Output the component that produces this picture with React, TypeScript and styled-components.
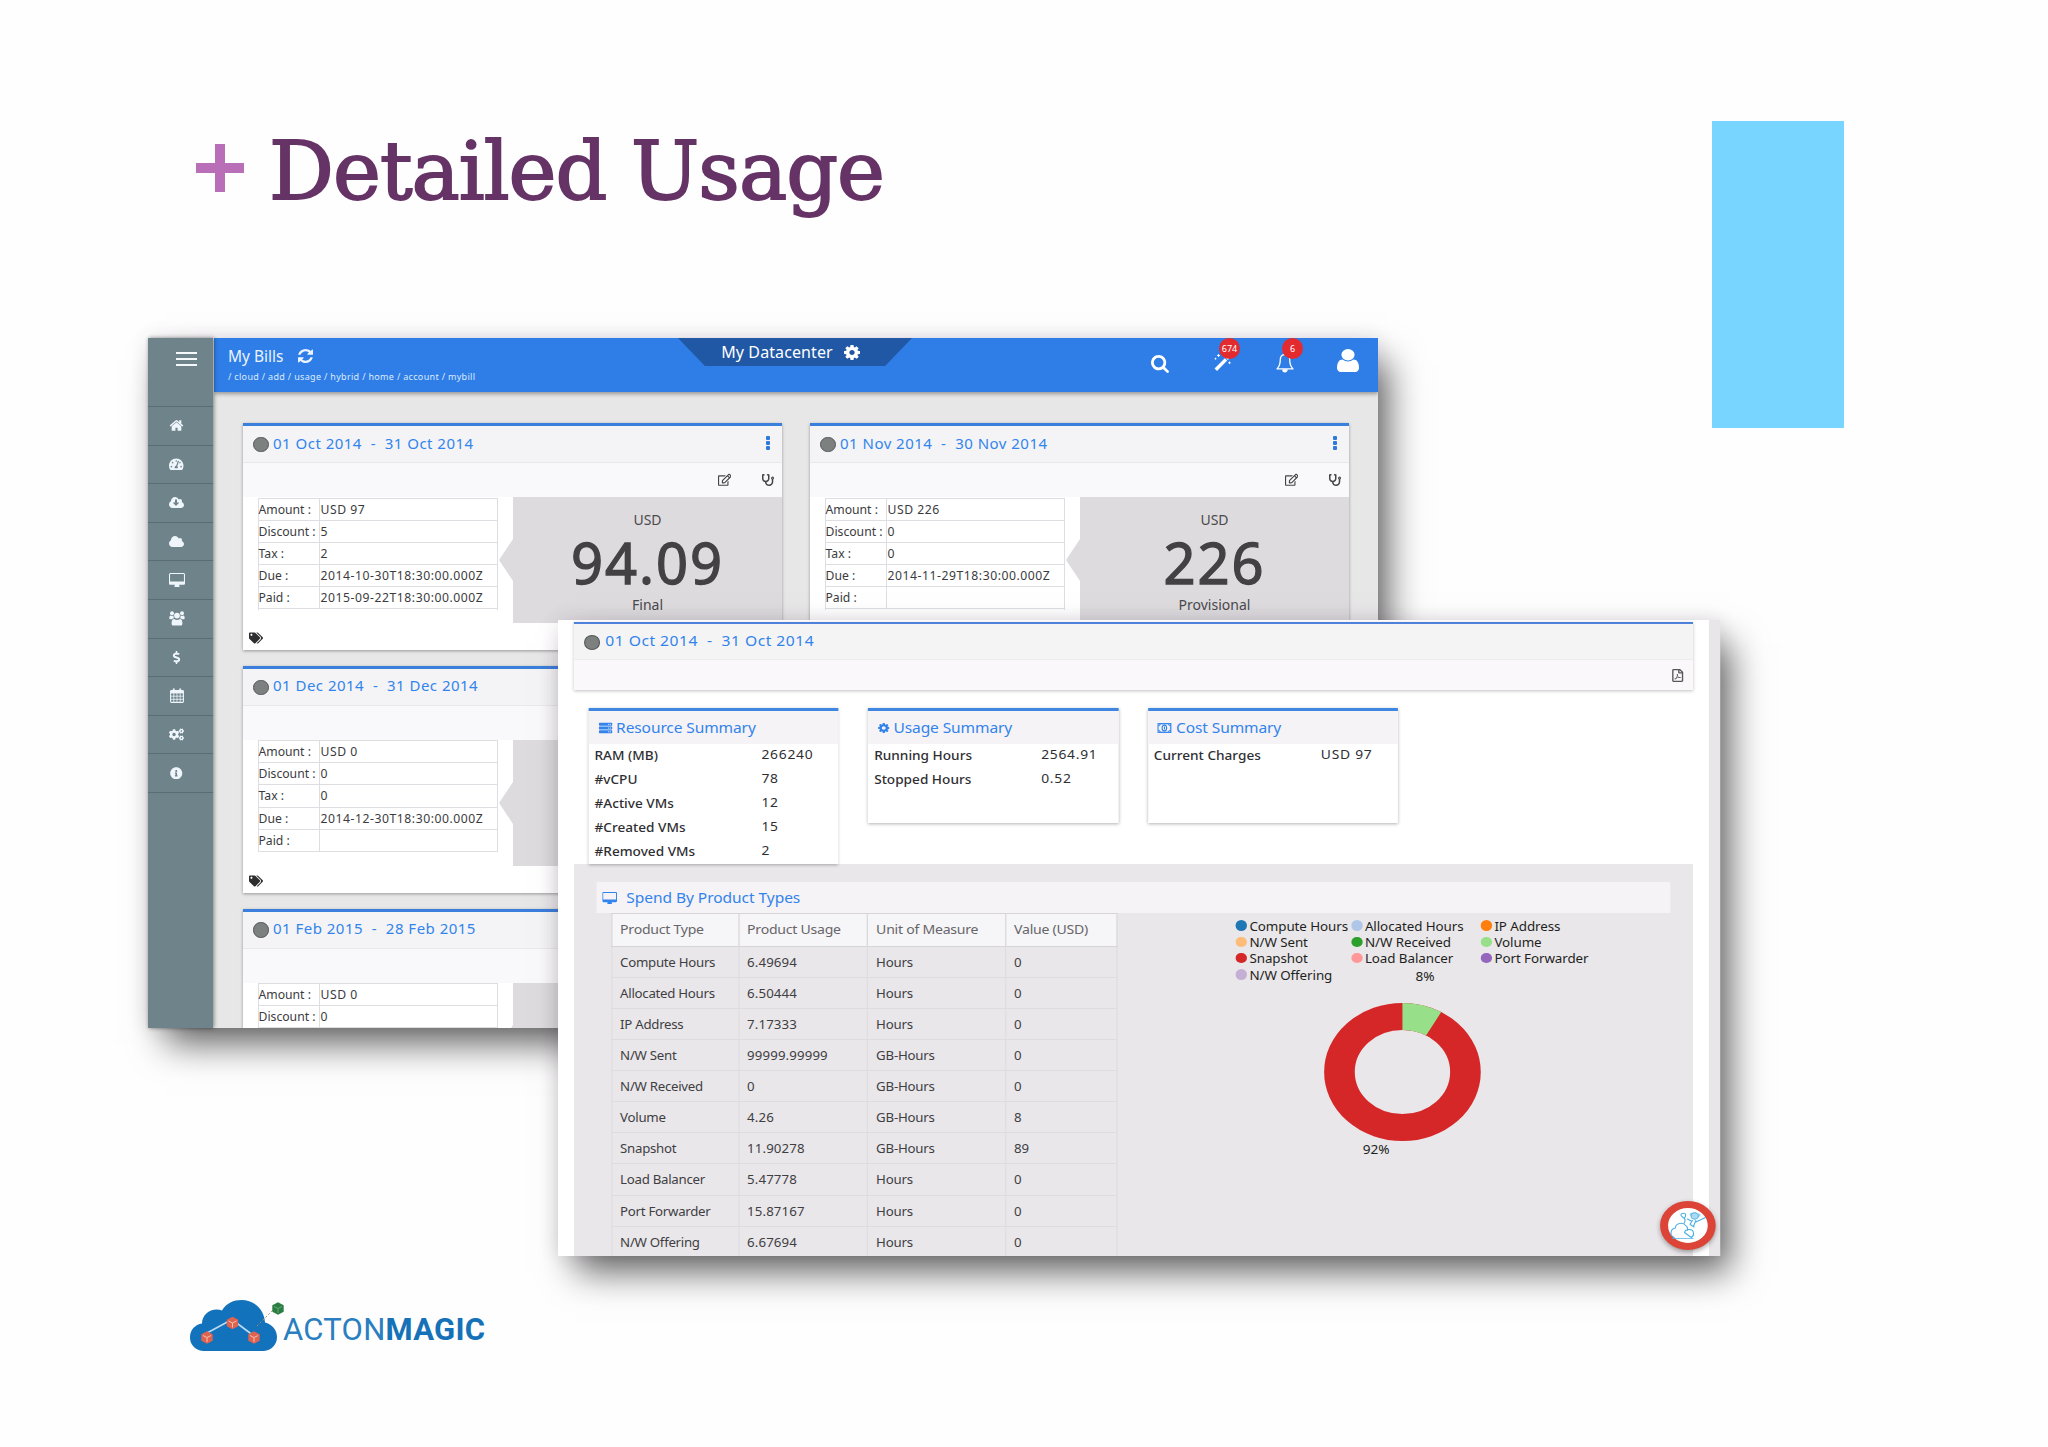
import React from "react";
import styled, { createGlobalStyle } from "styled-components";
import {
  FaTachometerAlt, FaDollarSign, FaCogs, FaInfoCircle, FaTags,
  FaRegEdit, FaStethoscope, FaRegFilePdf, FaServer,
} from "react-icons/fa";

/* The detail window is shown wider than its native proportions. */
const STRETCH = 1.135;
const w = (n: number) => `${n / STRETCH}px`;

const FONT = `"Noto Sans", "Open Sans", sans-serif`;

const GlobalStyle = createGlobalStyle`
  *, *::before, *::after { box-sizing: border-box; }
  html, body { margin: 0; padding: 0; background: #fff; }
  body { font-family: ${FONT}; }
  svg { display: block; flex: none; }
`;

/* ---------- slide ---------- */
const Slide = styled.main`
  position: relative;
  width: 2048px;
  height: 1447px;
  overflow: hidden;
  background: #fefefe;
  display: flex;
  flex-direction: column;
  justify-content: space-between;
  padding: 121px 204px 92px 190px;
`;
const SlideHeader = styled.header`
  display: flex;
  justify-content: space-between;
`;
const Heading = styled.div`
  display: flex;
  gap: 25px;
  padding: 0 0 0 6px;
`;
const Plus = styled.svg`
  margin-top: 23px;
`;
const Title = styled.h1`
  margin: 0;
  font: 400 81px/100px "DejaVu Serif", serif;
  letter-spacing: -1px;
  -webkit-text-stroke: 1.8px #663366;
  color: #663366;
  white-space: nowrap;
`;
const Accent = styled.div`
  width: 132px;
  height: 307px;
  background: #77d5ff;
`;
const Logo = styled.footer`
  display: flex;
  align-items: flex-start;
  height: 56px;
`;
const LogoText = styled.span`
  font: 400 31px/36px Roboto, sans-serif;
  color: #2a7fc0;
  letter-spacing: 0.25px;
  margin: 13px 0 0 -5px;
  white-space: nowrap;
  b { font-weight: 700; color: #1571b8; }
`;

/* ---------- windows ---------- */
const Window = styled.section`
  position: absolute;
  box-shadow: 14px 20px 34px -4px rgba(0, 0, 0, 0.6), 0 0 18px rgba(90, 50, 90, 0.12);
`;
const BillsWindow = styled(Window)`
  left: 148px;
  top: 338px;
  width: 1230px;
  height: 690px;
  display: flex;
  background: #e8e7e8;
`;
const DetailWindow = styled(Window)`
  left: 558px;
  top: 620px;
  width: 1162px;
  height: 636px;
  background: #fff;
`;

/* ---------- sidebar ---------- */
const Sidebar = styled.nav`
  width: 65px;
  flex: none;
  background: #6f838b;
  box-shadow: 1px 0 4px rgba(0, 0, 0, 0.45);
  z-index: 1;
`;
const Burger = styled.div`
  height: 68px;
  padding: 14px 0 0 28px;
  display: flex;
  flex-direction: column;
  gap: 4px;
  i { width: 21px; height: 2px; background: #f4f8fa; }
`;
const NavItem = styled.div`
  height: 38.6px;
  border-top: 1px solid #596d76;
  display: flex;
  align-items: center;
  justify-content: center;
  padding-right: 8px;
  color: #eef5fb;
  &:last-child { border-bottom: 1px solid #596d76; height: 39.6px; }
`;

/* ---------- bills window main ---------- */
const Main = styled.div`
  flex: 1;
  min-width: 0;
  margin-left: 1px;
  overflow: hidden;
`;
const TopBar = styled.header`
  position: relative;
  height: 54px;
  background: #2f7de6;
  color: #fff;
  display: flex;
  justify-content: space-between;
  box-shadow: 0 2px 4px rgba(0, 0, 0, 0.35);
`;
const PageInfo = styled.div`
  padding: 7px 0 0 14px;
`;
const PageTitle = styled.div`
  display: flex;
  align-items: center;
  gap: 14px;
  font-size: 15.5px;
  line-height: 22px;
  color: #eaf3ff;
  letter-spacing: 0px;
`;
const Crumbs = styled.div`
  font-size: 9px;
  line-height: 14px;
  margin-top: 3px;
  letter-spacing: 0.32px;
  color: #dcebff;
  white-space: pre;
`;
const CenterTab = styled.div`
  position: absolute;
  left: 464px;
  top: 0;
  width: 234px;
  height: 28px;
  background: #2058a5;
  clip-path: polygon(0 0, 100% 0, 88.5% 100%, 11.5% 100%);
  display: flex;
  align-items: center;
  justify-content: center;
  gap: 11px;
  padding-right: 9px;
  font-size: 16px;
  line-height: 26px;
  letter-spacing: 0.1px;
`;
const TopIcons = styled.div`
  display: flex;
  padding-right: 18px;
`;
const TopIcon = styled.div<{ $w: number; $top: number }>`
  position: relative;
  width: ${(p) => p.$w}px;
  padding-top: ${(p) => p.$top}px;
`;
const Badge = styled.span<{ $x: number }>`
  position: absolute;
  left: ${(p) => p.$x}px;
  top: 0;
  width: 21px;
  height: 21px;
  border-radius: 50%;
  background: #e32a2f;
  font-size: 9px;
  line-height: 21px;
  text-align: center;
`;
const Cards = styled.div`
  display: grid;
  grid-template-columns: 539px 539px;
  column-gap: 28px;
  row-gap: 15.8px;
  padding: 31px 0 0 29px;
`;
const Card = styled.article`
  height: 227px;
  background: #fff;
  border-top: 3px solid #3b7fdc;
  box-shadow: 0 1px 3px rgba(0, 0, 0, 0.35);
`;
const CardHead = styled.div`
  height: 37px;
  display: flex;
  align-items: center;
  background: #f4f4f6;
  border-bottom: 1px solid #e9e9ec;
  padding: 0 12px 3px 10px;
`;
const Dot = styled.i<{ $w?: number; $h?: number }>`
  width: ${(p) => p.$w ?? 15.5}px;
  height: ${(p) => p.$h ?? 15.5}px;
  border-radius: 50%;
  background: #7c807f;
  border: 1.5px solid #55585a;
  margin: 4px 4.5px 0 0;
  flex: none;
`;
const Period = styled.span`
  flex: 1;
  font-size: 15px;
  letter-spacing: 0.48px;
  color: #3284ec;
  white-space: pre;
`;
const Kebab = styled.span`
  display: flex;
  flex-direction: column;
  gap: 1px;
  i { width: 4px; height: 4px; border-radius: 1px; background: #2f79de; }
`;
const CardTools = styled.div`
  height: 34px;
  background: #f9f8fa;
  display: flex;
  justify-content: flex-end;
  align-items: center;
  gap: 31px;
  padding: 0 8px 0 0;
  color: #444;
`;
const CardBody = styled.div`
  display: flex;
  height: 126px;
`;
const Facts = styled.dl`
  margin: 0.5px 0 0 14.5px;
  width: 240px;
  height: 112px;
  display: grid;
  grid-template-columns: 61px 1fr;
  grid-auto-rows: 22.1px;
  border: solid #dedee2;
  border-width: 1px 1px 0 1px;
  font-size: 12.2px;
  line-height: 21.5px;
  color: #3b3b3e;
`;
const Term = styled.dt`
  border: solid #dedee2;
  border-width: 0 1px 1px 0;
  white-space: nowrap;
`;
const Value = styled.dd`
  margin: 0;
  padding-left: 1px;
  border-bottom: 1px solid #dedee2;
  letter-spacing: 0.54px;
`;
const Total = styled.div`
  position: relative;
  margin-left: 15.5px;
  flex: 1;
  background: #dddbde;
  color: #4b494c;
  text-align: center;
  font-size: 14px;
  line-height: 20px;
  padding-top: 12.5px;
  &::before {
    content: "";
    position: absolute;
    left: -14px;
    top: 42px;
    border: solid transparent;
    border-width: 21px 14px 21px 0;
    border-right-color: #dddbde;
  }
`;
const Figure = styled.div`
  font-size: 56px;
  line-height: 65px;
  letter-spacing: 2px;
  -webkit-text-stroke: 1.3px #434144;
  color: #434144;
`;
const CardFoot = styled.div`
  padding: 8px 0 0 6px;
  color: #2e2e30;
`;

/* ---------- detail window ---------- */
const Stretched = styled.div`
  width: ${w(1162)};
  height: 636px;
  overflow: hidden;
  transform: scaleX(${STRETCH});
  transform-origin: 0 0;
  border-right: ${w(12)} solid #e8e6e9;
  padding: 2px ${w(16)} 0 ${w(16)};
  position: relative;
`;
const PeriodBox = styled.div`
  height: 68px;
  border-top: 2px solid #4f80db;
  background: #faf8fb;
  box-shadow: 0 1px 3px rgba(0, 0, 0, 0.25);
  display: flex;
  flex-direction: column;
`;
const PeriodHead = styled.div`
  height: 36px;
  display: flex;
  align-items: center;
  background: #f5f4f5;
  border-bottom: 1px solid #ececee;
  padding: 0 0 2px ${w(10)};
`;
const PeriodText = styled(Period)`
  font-size: 13.8px;
  letter-spacing: 0.42px;
`;
const PeriodTools = styled.div`
  flex: 1;
  display: flex;
  align-items: center;
  justify-content: flex-end;
  padding-right: ${w(8)};
  color: #57565a;
`;
const Summaries = styled.div`
  display: flex;
  align-items: flex-start;
  gap: ${w(29.7)};
  height: 174px;
  padding: 18px 0 0 ${w(14.5)};
`;
const Summary = styled.section<{ $h: number }>`
  position: relative;
  z-index: 1;
  width: ${w(250)};
  flex: none;
  height: ${(p) => p.$h}px;
  background: #fff;
  border-top: 3px solid #3f86e0;
  box-shadow: 0 1px 3px rgba(0, 0, 0, 0.3);
`;
const SummaryTitle = styled.h2`
  margin: 0;
  height: 33px;
  display: flex;
  align-items: center;
  gap: ${w(4)};
  padding-left: ${w(10)};
  background: #f5f3f6;
  color: #3284ec;
  font-size: 13.7px;
  font-weight: 400;
  letter-spacing: -0.1px;
  white-space: nowrap;
`;
const SummaryRow = styled.div`
  display: flex;
  height: 24px;
  padding-left: ${w(6)};
  font-size: 12px;
  line-height: 24px;
  color: #2f2f33;
  span:first-child { width: ${w(167)}; font-weight: 500; white-space: nowrap; }
  span:last-child { line-height: 21px; font-size: 12.2px; letter-spacing: 0.65px; }
`;
const Spend = styled.section`
  height: 392px;
  background: #e9e7ea;
  padding: 18px ${w(22.5)} 0;
`;
const SpendTitle = styled.h2`
  margin: 0;
  height: 31px;
  background: #f5f3f6;
  display: flex;
  align-items: center;
  gap: ${w(9)};
  padding-left: ${w(6)};
  color: #3284ec;
  font-size: 13.7px;
  font-weight: 400;
  letter-spacing: -0.05px;
`;
const SpendBody = styled.div`
  display: flex;
  align-items: flex-start;
  padding-left: ${w(14.5)};
`;
const Usage = styled.table`
  width: ${w(506)};
  flex: none;
  table-layout: fixed;
  border-collapse: collapse;
  color: #3f3e42;
  font-size: 11.7px;
  letter-spacing: -0.05px;
  td, th {
    height: 31.07px;
    padding: 0 0 0 ${w(8)};
    text-align: left;
    font-weight: 400;
    border: 1px solid #dedce0;
    line-height: 18px;
    white-space: nowrap;
  }
  td:first-child { letter-spacing: -0.25px; }
  td:nth-child(2) { letter-spacing: 0.1px; }
  td:nth-child(3) { letter-spacing: -0.2px; }
  th {
    height: 33px;
    background: #f6f5f7;
    color: #67666a;
    font-size: 12.4px;
    letter-spacing: -0.22px;
    border-color: #d6d4d8;
  }
`;
const Chart = styled.div`
  flex: 1;
  padding: 4.5px 0 0 ${w(118)};
  color: #1f1f22;
`;
const Legend = styled.ul`
  list-style: none;
  margin: 0;
  padding: 0;
  display: grid;
  grid-template-columns: ${w(115.5)} ${w(129.5)} ${w(130)};
  grid-auto-rows: 16.3px;
  height: 65px;
`;
const LegendItem = styled.li<{ $c: string }>`
  display: flex;
  align-items: center;
  gap: ${w(2)};
  font-size: 11.8px;
  line-height: 16px;
  white-space: nowrap;
  letter-spacing: -0.07px;
  &::before {
    content: "";
    width: 10px;
    height: 10.5px;
    border-radius: 50%;
    background: ${(p) => p.$c};
  }
`;
const Donut = styled.svg`
  margin-left: ${w(75)};
  margin-top: -5.5px;
  overflow: visible;
`;
const HelperLayer = styled.div`
  position: absolute;
  inset: 0;
  width: ${w(1162)};
  transform: scaleX(${STRETCH});
  transform-origin: 0 0;
  pointer-events: none;
`;
const Helper = styled.div`
  position: absolute;
  right: ${w(4)};
  bottom: 6px;
  width: 49px;
  height: 49px;
  border-radius: 50%;
  border: 7px solid #db4437;
  background: #fff;
  box-shadow: 0 2px 5px rgba(0, 0, 0, 0.35);
`;

/* ---------- glyphs ---------- */
const GLYPHS: Record<string, [string, string]> = {
  home: ["0 0 1792 1792", "M1472 992v480q0 26-19 45t-45 19h-384v-384h-256v384h-384q-26 0-45-19t-19-45v-480q0-1 .5-3t.5-3l575-474 575 474q1 2 1 6zm223-69l-62 74q-8 9-21 11h-3q-13 0-21-7l-692-577-692 577q-12 8-24 7-13-2-21-11l-62-74q-8-10-7-23.5t11-21.5l719-599q32-26 76-26t76 26l244 204v-195q0-14 9-23t23-9h192q14 0 23 9t9 23v408l219 182q10 8 11 21.5t-7 23.5z"],
  cloud: ["64 128 1920 1536", "M1984 1152q0 159-112.5 271.5t-271.5 112.5h-1088q-185 0-316.5-131.5t-131.5-316.5q0-132 71-241.5t187-163.5q-2-28-2-43 0-212 150-362t362-150q158 0 286.5 88t187.5 230q70-62 166-62 106 0 181 75t75 181q0 75-41 138 129 30 213 134.5t84 239.5z"],
  cloudDown: ["64 128 1920 1536", "M1344 864q0-14-9-23t-23-9h-224v-352q0-13-9.5-22.5t-22.5-9.5h-192q-13 0-22.5 9.5t-9.5 22.5v352h-224q-13 0-22.5 9.5t-9.5 22.5q0 14 9 23l352 352q9 9 23 9t23-9l351-351q10-12 10-24zm640 288q0 159-112.5 271.5t-271.5 112.5h-1088q-185 0-316.5-131.5t-131.5-316.5q0-132 71-241.5t187-163.5q-2-28-2-43 0-212 150-362t362-150q158 0 286.5 88t187.5 230q70-62 166-62 106 0 181 75t75 181q0 75-41 138 129 30 213 134.5t84 239.5z"],
  desktop: ["-64 0 1920 1664", "M1728 992v-832q0-13-9.5-22.5t-22.5-9.5h-1600q-13 0-22.5 9.5t-9.5 22.5v832q0 13 9.5 22.5t22.5 9.5h1600q13 0 22.5-9.5t9.5-22.5zm128-832v1088q0 66-47 113t-113 47h-544q0 37 16 77.5t32 71 16 43.5q0 26-19 45t-45 19h-512q-26 0-45-19t-19-45q0-14 16-44t32-70 16-78h-544q-66 0-113-47t-47-113v-1088q0-66 47-113t113-47h1600q66 0 113 47t47 113z"],
  refresh: ["128 128 1536 1536", "M1639 1056q0 5-1 7-64 268-268 434.5t-478 166.5q-146 0-282.5-55t-243.5-157l-129 129q-19 19-45 19t-45-19-19-45v-448q0-26 19-45t45-19h448q26 0 45 19t19 45-19 45l-137 137q71 66 161 102t187 36q134 0 250-65t186-179q11-17 53-117 8-23 30-23h192q13 0 22.5 9.5t9.5 22.5zm25-800v448q0 26-19 45t-45 19h-448q-26 0-45-19t-19-45 19-45l138-138q-148-137-349-137-134 0-250 65t-186 179q-11 17-53 117-8 23-30 23h-199q-13 0-22.5-9.5t-9.5-22.5v-7q65-268 270-434.5t480-166.5q146 0 284 55.5t245 156.5l130-129q19-19 45-19t45 19 19 45z"],
  cog: ["128 128 1536 1536", "M1152 896q0-106-75-181t-181-75-181 75-75 181 75 181 181 75 181-75 75-181zm512-109v222q0 12-8 23t-20 13l-185 28q-19 54-39 91 35 50 107 138 10 12 10 25t-9 23q-27 37-99 108t-94 71q-12 0-26-9l-138-108q-44 23-91 38-16 136-29 186-7 28-36 28h-222q-14 0-24.5-8.5t-11.5-21.5l-28-184q-49-16-90-37l-141 107q-10 9-25 9-14 0-25-11-126-114-165-168-7-10-7-23 0-12 8-23 15-21 51-66.5t54-70.5q-27-50-41-99l-183-27q-13-2-21-12.5t-8-23.5v-222q0-12 8-23t19-13l186-28q14-46 39-92-40-57-107-138-10-12-10-24 0-10 9-23 26-36 98.5-107.5t94.5-71.5q13 0 26 10l138 107q44-23 91-38 16-136 29-186 7-28 36-28h222q14 0 24.5 8.5t11.5 21.5l28 184q49 16 90 37l142-107q9-9 24-9 13 0 25 10 129 119 165 170 7 8 7 22 0 12-8 23-15 21-51 66.5t-54 70.5q26 50 41 98l183 28q13 2 21 12.5t8 23.5z"],
  search: ["64 128 1664 1664", "M1216 832q0-185-131.5-316.5t-316.5-131.5-316.5 131.5-131.5 316.5 131.5 316.5 316.5 131.5 316.5-131.5 131.5-316.5zm512 832q0 52-38 90t-90 38q-54 0-90-38l-343-342q-179 124-399 124-143 0-273.5-55.5t-225-150-150-225-55.5-273.5 55.5-273.5 150-225 225-150 273.5-55.5 273.5 55.5 225 150 150 225 55.5 273.5q0 220-124 399l343 343q37 37 37 90z"],
  user: ["256 128 1280 1536", "M1536 1399q0 109-62.5 187t-150.5 78h-854q-88 0-150.5-78t-62.5-187q0-85 8.500-160.500t31.500-152 58.500-131 94-89 134.500-34.500q131 128 313 128t313-128q76 0 134.500 34.500t94 89 58.500 131 31.500 152 8.500 160.500zm-256-887q0 159-112.500 271.500t-271.500 112.500-271.500-112.500-112.500-271.500 112.500-271.500 271.500-112.500 271.500 112.500 112.500 271.500z"],
};
const Glyph = ({ name, width, height }: { name: string; width: number; height: number }) => (
  <svg width={width} height={height} viewBox={GLYPHS[name][0]} preserveAspectRatio="none" fill="currentColor">
    <path d={GLYPHS[name][1]} />
  </svg>
);
const Calendar = () => (
  <svg width="14" height="15" viewBox="0 0 14 15" fill="none" stroke="currentColor">
    <rect x="0.6" y="2.5" width="12.8" height="11.9" rx="0.8" strokeWidth="1.1" />
    <path d="M0.6 4.2h12.8" strokeWidth="2.4" />
    <path d="M3.8 5v9.4M7 5v9.4M10.2 5v9.4M0.6 8.2h12.8M0.6 11.3h12.8" strokeWidth="0.8" />
    <path d="M3.8 0.4v3M10.2 0.4v3" strokeWidth="1.8" />
  </svg>
);
const Users = () => (
  <svg width="16" height="15" viewBox="0 0 16 15" fill="currentColor">
    <circle cx="3" cy="2.3" r="2" />
    <circle cx="13" cy="2.3" r="2" />
    <circle cx="8" cy="4.6" r="2.9" />
    <path d="M0.300 7.500c0-2 .4-3 1.400-3 .8.600 1.900.600 2.700.100 0 1 .1 1.800.7 2.700-.9.100-1.600.500-2.100 1H1.300c-.6 0-1-.300-1-.800zM15.700 7.500c0-2-.4-3-1.400-3-.8.600-1.900.600-2.700.100 0 1-.1 1.800-.7 2.700.9.100 1.600.500 2.100 1h1.700c.6 0 1-.300 1-.800z" />
    <path d="M2.600 12.700c0-3 .7-4.700 2.600-4.700 1.600 1.300 4 1.300 5.600 0 1.900 0 2.600 1.700 2.600 4.700 0 1.200-.8 1.900-1.900 1.900h-7c-1.100 0-1.900-.7-1.900-1.900z" />
  </svg>
);
const Wand = () => (
  <svg width="18" height="19" viewBox="0 0 18 19" fill="none" stroke="#fff">
    <path d="M1.800 16.800L12 6.400" strokeWidth="3.400" />
    <path d="M12.700 5.700L15 3.400" strokeWidth="3.400" />
    <path d="M4.500 1v3M3 2.500h3M8.500 0v2M7.500 1h2M1.500 4.800v1.800M.6 5.700h1.800M15.500 8.500v2.600M14.200 9.800h2.600" strokeWidth="0.900" />
  </svg>
);
const Bell = () => (
  <svg width="18" height="20" viewBox="0 0 18 20" fill="none" stroke="#fff" strokeWidth="1.3">
    <path d="M9 1.6c-3 0-4.7 2.2-4.7 5 0 4.6-1.3 7.4-3.3 9.3h16c-2-1.9-3.3-4.7-3.3-9.3 0-2.8-1.7-5-4.7-5z" strokeLinejoin="round" />
    <path d="M9 0v1.8" strokeWidth="1.8" />
    <path d="M6.8 16.3a2.2 2.3 0 0 0 4.4 0z" fill="#fff" stroke="none" />
    <path d="M6.8 16.5a2.2 2.3 0 0 0 4.4 0" />
  </svg>
);
const Money = () => (
  <svg width="12.5" height="10" viewBox="0 0 15 10" preserveAspectRatio="none" fill="none" stroke="currentColor">
    <rect x="0.7" y="0.7" width="13.6" height="8.6" strokeWidth="1.3" />
    <ellipse cx="7.5" cy="5" rx="2.4" ry="2.9" strokeWidth="1.2" />
    <path d="M7.6 3.5v3" strokeWidth="1.1" />
    <path d="M1 3a2 2 0 0 0 2-2M1 7a2 2 0 0 1 2 2M14 3a2 2 0 0 1-2-2M14 7a2 2 0 0 0-2 2" strokeWidth="1" />
  </svg>
);
const Monkey = () => (
  <svg width="35" height="35" viewBox="0 0 35 35" fill="none" stroke="#4fb0e2" strokeWidth="1" strokeLinecap="round" strokeLinejoin="round">
    <path d="M5.500 29.500c-4.500-2-3.500-8.500 1-9.500 0-5 6.500-6.500 9.500-2 1.500 1.500 1.500 3 1 4.500M14.500 24.500c1-4 7.500-4 8 .5.3 2-.5 3.500-2 4.500z" />
    <path d="M4 30.500h18" strokeWidth="0.7" />
    <path d="M14 15.500c2-3 1-5-1.200-6.500S11 5.500 13.500 5.200s2.500 3 1 4.800" />
    <path d="M19.500 16l2-3.500M24.500 12.500l-2 5.500M24.500 14l8.500-4.500M20.500 13l-3.500-2M19.500 16.500l3.500 2.500" />
    <circle cx="23.500" cy="8" r="3.200" fill="#a9dbf3" strokeWidth="0.900" />
    <path d="M20 7.500c-1.300-1.500.2-2.800 1.400-2.300M26.800 6c1.800-.6 1.800 1.800.4 2.500" strokeWidth="0.800" />
  </svg>
);
const Cube = ({ x, y, fill, line }: { x: number; y: number; fill: string; line: string }) => (
  <g transform={`translate(${x} ${y})`}>
    <path d="M0-6.300l5.700 3v6.600L0 6.300l-5.700-3v-6.600z" fill={fill} />
    <path d="M-4-2l4 2 4-2M0 0v4.500" stroke={line} strokeWidth="1" fill="none" />
  </g>
);
const CloudMark = () => (
  <svg width="98" height="56" viewBox="0 0 98 56">
    <path d="M13 52C5 51 0 45.500 0 38.500 0 31 5 25.500 12 24.500 12 15 22 8 32 11.500 36 4 44 1 51.500 1 63 1 74 9 75 23.500 82 25 87 31 87 38c0 8-6 13.500-13 14z" fill="#1272bc" />
    <path d="M17 34L42 20.500 64 37" stroke="#b9dcf3" strokeWidth="1.6" fill="none" />
    <path d="M67 27L85 9" stroke="#b08a5c" strokeWidth="1" strokeDasharray="2 2" />
    <Cube x={17} y={38.5} fill="#e0634f" line="#f6c0b5" />
    <Cube x={42.5} y={24} fill="#e0634f" line="#f6c0b5" />
    <Cube x={64} y={38.5} fill="#e0634f" line="#f6c0b5" />
    <Cube x={88} y={9.5} fill="#2c7d42" line="#61a873" />
  </svg>
);

/* ---------- data ---------- */
const NAV = [
  <Glyph name="home" width={15} height={15} />,
  <FaTachometerAlt size={14.5} />,
  <Glyph name="cloudDown" width={15} height={12} />,
  <Glyph name="cloud" width={15} height={12} />,
  <Glyph name="desktop" width={16} height={14} />,
  <Users />,
  <FaDollarSign size={13} />,
  <Calendar />,
  <FaCogs size={15} />,
  <FaInfoCircle size={12.5} />,
];

type Bill = { period: string; facts: string[]; total: string; status: string; tools?: boolean };
const BILLS: Bill[] = [
  { period: "01 Oct 2014  -  31 Oct 2014", facts: ["USD 97", "5", "2", "2014-10-30T18:30:00.000Z", "2015-09-22T18:30:00.000Z"], total: "94.09", status: "Final", tools: true },
  { period: "01 Nov 2014  -  30 Nov 2014", facts: ["USD 226", "0", "0", "2014-11-29T18:30:00.000Z", ""], total: "226", status: "Provisional", tools: true },
  { period: "01 Dec 2014  -  31 Dec 2014", facts: ["USD 0", "0", "0", "2014-12-30T18:30:00.000Z", ""], total: "", status: "" },
  { period: "", facts: [], total: "", status: "" },
  { period: "01 Feb 2015  -  28 Feb 2015", facts: ["USD 0", "0"], total: "", status: "" },
];
const TERMS = ["Amount :", "Discount :", "Tax :", "Due :", "Paid :"];

const USAGE = [
  ["Compute Hours", "6.49694", "Hours", "0"],
  ["Allocated Hours", "6.50444", "Hours", "0"],
  ["IP Address", "7.17333", "Hours", "0"],
  ["N/W Sent", "99999.99999", "GB-Hours", "0"],
  ["N/W Received", "0", "GB-Hours", "0"],
  ["Volume", "4.26", "GB-Hours", "8"],
  ["Snapshot", "11.90278", "GB-Hours", "89"],
  ["Load Balancer", "5.47778", "Hours", "0"],
  ["Port Forwarder", "15.87167", "Hours", "0"],
  ["N/W Offering", "6.67694", "Hours", "0"],
];
const COLORS = ["#1f77b4", "#aec7e8", "#ff7f0e", "#ffbb78", "#2ca02c", "#98df8a", "#d62728", "#ff9896", "#9467bd", "#c5b0d5"];

const BillCard = ({ bill }: { bill: Bill }) => (
  <Card>
    <CardHead>
      <Dot />
      <Period>{bill.period}</Period>
      {bill.tools && <Kebab><i /><i /><i /></Kebab>}
    </CardHead>
    <CardTools>
      {bill.tools && <><FaRegEdit size={13.5} /><FaStethoscope size={12} /></>}
    </CardTools>
    <CardBody>
      <Facts>
        {bill.facts.map((f, i) => (
          <React.Fragment key={i}>
            <Term>{TERMS[i]}</Term>
            <Value>{f}</Value>
          </React.Fragment>
        ))}
      </Facts>
      <Total>
        {bill.total && <><div>USD</div><Figure>{bill.total}</Figure><div>{bill.status}</div></>}
      </Total>
    </CardBody>
    <CardFoot><FaTags size={14} /></CardFoot>
  </Card>
);

const SummaryCard = ({ icon, title, rows, h }: { icon: React.ReactNode; title: string; rows: string[][]; h: number }) => (
  <Summary $h={h}>
    <SummaryTitle>{icon}{title}</SummaryTitle>
    {rows.map(([k, v]) => (
      <SummaryRow key={k}><span>{k}</span><span>{v}</span></SummaryRow>
    ))}
  </Summary>
);

const R = 69;
const r = 42;
const angle = (8 / 97) * 2 * Math.PI;
const pt = (rad: number) => `${(80 + rad * Math.sin(angle)).toFixed(2)} ${(95 - rad * Math.cos(angle)).toFixed(2)}`;

export default function App() {
  return (
    <>
      <GlobalStyle />
      <Slide>
        <SlideHeader>
          <Heading>
            <Plus width="48" height="48" viewBox="0 0 48 48" fill="#b86fb8">
              <path d="M19 0h10v19h19v10H29v19H19V29H0V19h19z" />
            </Plus>
            <Title>Detailed Usage</Title>
          </Heading>
          <Accent />
        </SlideHeader>

        <BillsWindow>
          <Sidebar>
            <Burger><i /><i /><i /></Burger>
            {NAV.map((icon, i) => <NavItem key={i}>{icon}</NavItem>)}
          </Sidebar>
          <Main>
            <TopBar>
              <PageInfo>
                <PageTitle>My Bills<Glyph name="refresh" width={15} height={14} /></PageTitle>
                <Crumbs>/ cloud / add / usage / hybrid / home / account / mybill</Crumbs>
              </PageInfo>
              <CenterTab>My Datacenter<Glyph name="cog" width={16} height={15} /></CenterTab>
              <TopIcons>
                <TopIcon $w={63} $top={17}><Glyph name="search" width={18} height={18} /></TopIcon>
                <TopIcon $w={62} $top={15}><Wand /><Badge $x={5}>674</Badge></TopIcon>
                <TopIcon $w={61} $top={15}><Bell /><Badge $x={6}>6</Badge></TopIcon>
                <TopIcon $w={23} $top={11}><Glyph name="user" width={22} height={23} /></TopIcon>
              </TopIcons>
            </TopBar>
            <Cards>
              {BILLS.map((b, i) => <BillCard key={i} bill={b} />)}
            </Cards>
          </Main>
        </BillsWindow>

        <DetailWindow>
          <Stretched>
            <PeriodBox>
              <PeriodHead>
                <Dot $w={14.3} $h={14.3} />
                <PeriodText>01 Oct 2014  -  31 Oct 2014</PeriodText>
              </PeriodHead>
              <PeriodTools><FaRegFilePdf size={13} /></PeriodTools>
            </PeriodBox>
            <Summaries>
              <SummaryCard
                icon={<FaServer size={12} />}
                title="Resource Summary"
                h={156}
                rows={[["RAM (MB)", "266240"], ["#vCPU", "78"], ["#Active VMs", "12"], ["#Created VMs", "15"], ["#Removed VMs", "2"]]}
              />
              <SummaryCard
                icon={<Glyph name="cog" width={10} height={10} />}
                title="Usage Summary"
                h={115}
                rows={[["Running Hours", "2564.91"], ["Stopped Hours", "0.52"]]}
              />
              <SummaryCard icon={<Money />} title="Cost Summary" h={115} rows={[["Current Charges", "USD 97"]]} />
            </Summaries>
            <Spend>
              <SpendTitle><Glyph name="desktop" width={13} height={12} />Spend By Product Types</SpendTitle>
              <SpendBody>
                <Usage>
                  <colgroup>
                    <col style={{ width: w(127) }} />
                    <col style={{ width: w(129) }} />
                    <col style={{ width: w(138) }} />
                    <col style={{ width: w(112) }} />
                  </colgroup>
                  <thead>
                    <tr>{["Product Type", "Product Usage", "Unit of Measure", "Value (USD)"].map((h) => <th key={h}>{h}</th>)}</tr>
                  </thead>
                  <tbody>
                    {USAGE.map((row) => (
                      <tr key={row[0]}>{row.map((c, i) => <td key={i}>{c}</td>)}</tr>
                    ))}
                  </tbody>
                </Usage>
                <Chart>
                  <Legend>
                    {USAGE.map((row, i) => <LegendItem key={row[0]} $c={COLORS[i]}>{row[0]}</LegendItem>)}
                  </Legend>
                  <Donut width="180" height="200" viewBox="0 0 180 200" fontSize="12" fill="#1f1f22">
                    <circle cx="80" cy="95" r={(R + r) / 2} fill="none" stroke="#d62728" strokeWidth={R - r} />
                    <path d={`M80 ${95 - R}A${R} ${R} 0 0 1 ${pt(R)}L${pt(r)}A${r} ${r} 0 0 0 80 ${95 - r}z`} fill="#98df8a" />
                    <text x="91.5" y="4">8%</text>
                    <text x="45" y="177">92%</text>
                  </Donut>
                </Chart>
              </SpendBody>
            </Spend>
          </Stretched>
          <HelperLayer><Helper><Monkey /></Helper></HelperLayer>
        </DetailWindow>

        <Logo>
          <CloudMark />
          <LogoText>ACTON<b>MAGIC</b></LogoText>
        </Logo>
      </Slide>
    </>
  );
}
